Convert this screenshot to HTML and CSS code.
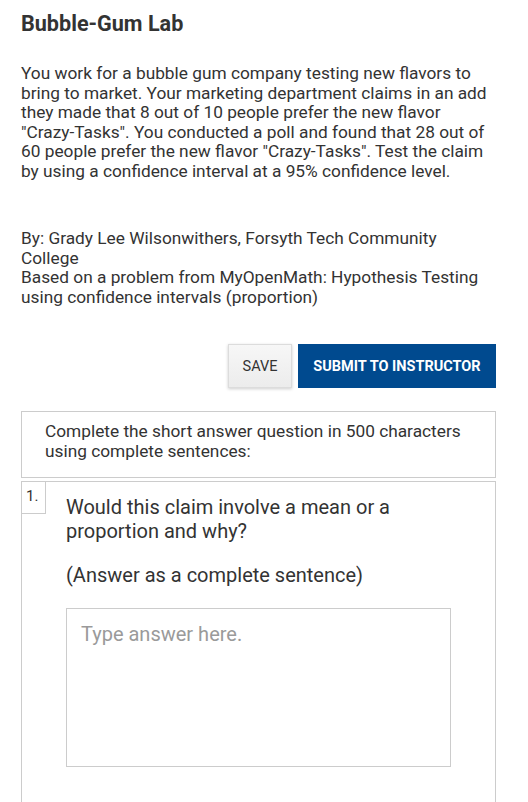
FILE: index.html
```html
<!DOCTYPE html>
<html>
<head>
<meta charset="utf-8">
<link rel="stylesheet" href="styles.css">
</head>
<body>
<div class="page">
  <h1 class="title">Bubble-Gum Lab</h1>
  <p class="intro">You work for a bubble gum company testing new flavors to bring to market. Your marketing department claims in an add they made that 8 out of 10 people prefer the new flavor "Crazy-Tasks". You conducted a poll and found that 28 out of 60 people prefer the new flavor "Crazy-Tasks". Test the claim by using a confidence interval at a 95% confidence level.</p>
  <p class="credit">By: Grady Lee Wilsonwithers, Forsyth Tech Community College<br>Based on a problem from MyOpenMath: Hypothesis Testing using confidence intervals (proportion)</p>
  <div class="actions">
    <button class="btn btn-save">SAVE</button>
    <button class="btn btn-submit">SUBMIT TO INSTRUCTOR</button>
  </div>
  <div class="instructions">Complete the short answer question in 500 characters using complete sentences:</div>
  <div class="question">
    <div class="qnum">1.</div>
    <div class="qbody">
      <p class="qtext">Would this claim involve a mean or a proportion and why?</p>
      <p class="qtext qnote">(Answer as a complete sentence)</p>
      <textarea class="answer" placeholder="Type answer here."></textarea>
    </div>
  </div>
</div>
</body>
</html>
```
FILE: styles.css
```css
html, body {
  margin: 0;
  padding: 0;
  background: #fff;
}
body {
  font-family: Roboto, "Liberation Sans", sans-serif;
  color: #333;
}
.page {
  padding: 0 32px 0 21px;
}
.title {
  margin: 0;
  padding-top: 11px;
  font-size: 21.6px;
  font-weight: bold;
  line-height: 26px;
  color: #333;
}
.intro {
  margin: 27px 0 0;
  font-size: 17.3px;
  line-height: 19.5px;
}
.credit {
  margin: 48px 0 0;
  font-size: 17.3px;
  line-height: 19.5px;
}
.actions {
  display: flex;
  justify-content: flex-end;
  gap: 6px;
  margin-top: 37px;
}
.btn {
  height: 44px;
  border: none;
  font-family: Roboto, "Liberation Sans", sans-serif;
  font-size: 14.5px;
  cursor: pointer;
}
.btn-save {
  width: 64px;
  background: linear-gradient(#f7f7f7, #ececec);
  border: 1px solid #dcdcdc;
  box-shadow: 0 1px 3px rgba(0,0,0,0.2);
  color: #333;
}
.btn-submit {
  width: 198px;
  background: #004a8f;
  color: #fff;
  font-weight: bold;
}
.instructions {
  margin-top: 23px;
  border: 1px solid #ccc;
  padding: 10px 20px 16px 23px;
  font-size: 17.3px;
  line-height: 19.5px;
}
.question {
  display: flex;
  margin-top: 3px;
  border: 1px solid #ccc;
  border-bottom: none;
  min-height: 330px;
}
.qnum {
  flex: none;
  width: 24px;
  height: 32px;
  box-sizing: border-box;
  border-right: 1px solid #ccc;
  border-bottom: 1px solid #ccc;
  padding: 5px 0 0 4px;
  font-size: 15px;
  line-height: 18px;
}
.qbody {
  flex: 1;
  padding: 13px 44px 0 20px;
}
.qtext {
  margin: 0;
  font-size: 20px;
  line-height: 24px;
}
.qnote {
  margin-top: 20px;
}
.answer {
  display: block;
  box-sizing: border-box;
  width: 385px;
  height: 159px;
  margin-top: 21px;
  border: 1px solid #ccc;
  border-radius: 0;
  padding: 13px 14px;
  font-family: Roboto, "Liberation Sans", sans-serif;
  font-size: 20px;
  line-height: 24px;
  color: #333;
  resize: none;
  outline: none;
}
.answer::placeholder {
  color: #9a9a9a;
}
```
